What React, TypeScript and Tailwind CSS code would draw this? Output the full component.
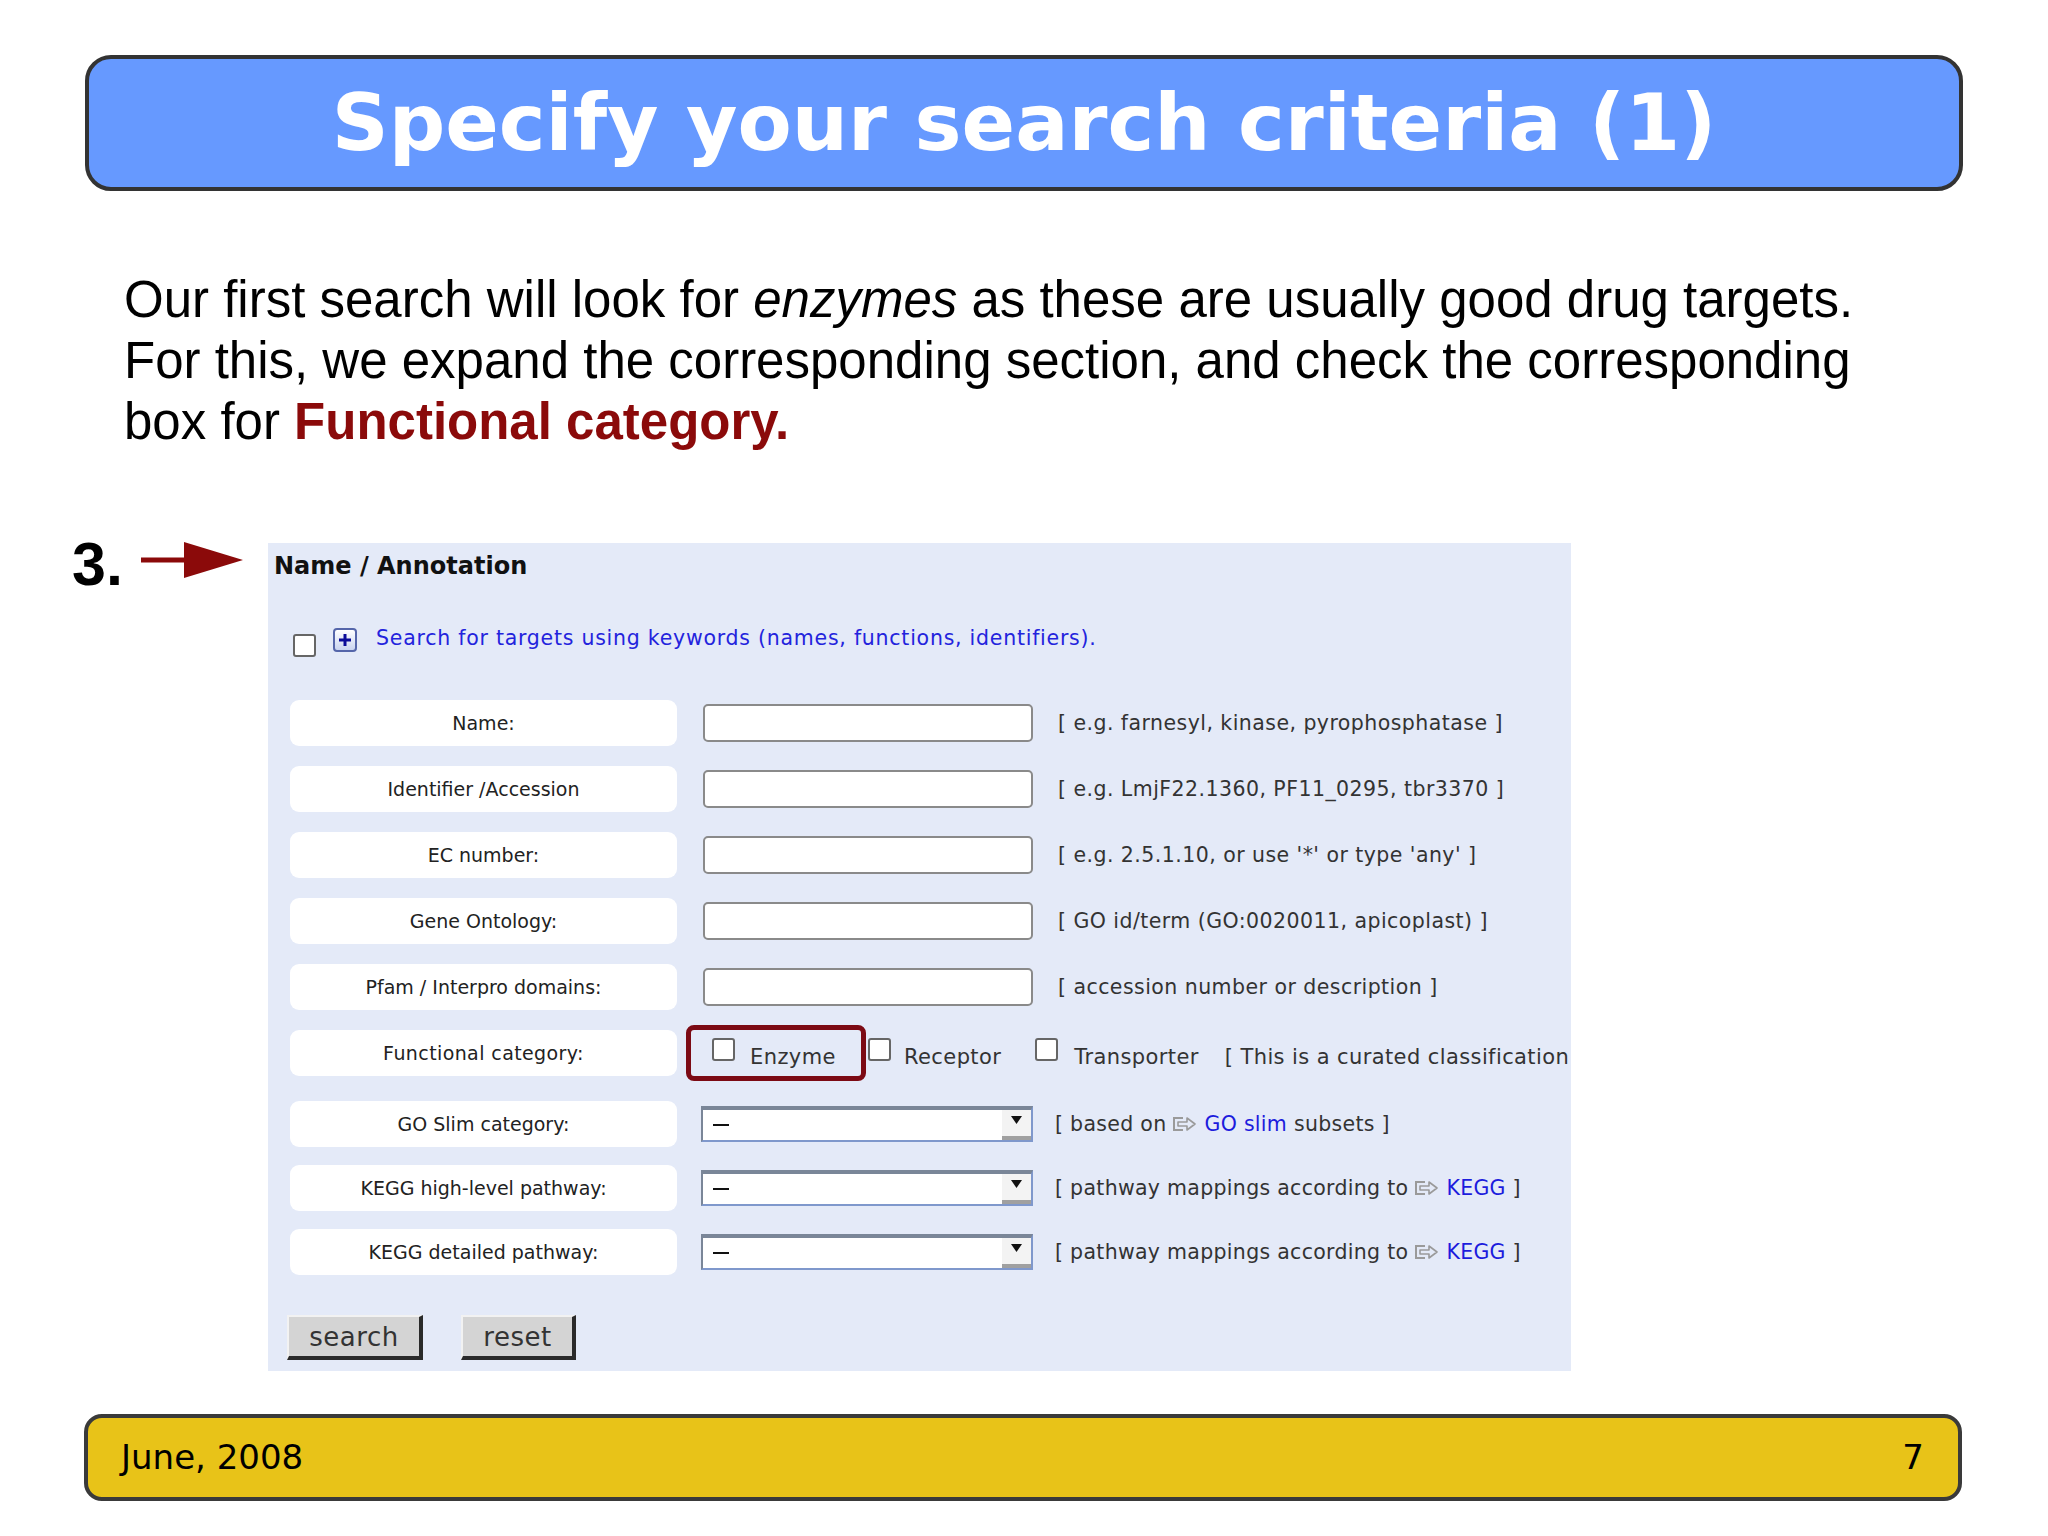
import React from "react";

const formFont = { fontFamily: '"DejaVu Sans", Verdana, sans-serif' } as const;

function Box({ className = "" }: { className?: string }) {
  return <span className={"inline-block w-[23px] h-[23px] bg-white border-2 border-[#666] rounded-[3px] shrink-0 " + className} />;
}

function ExtIcon() {
  return (
    <svg width="26" height="18" viewBox="0 0 26 18" className="inline-block mx-[6px] align-[-1px]">
      <path d="M11 3 H2 V15 H11" fill="none" stroke="#9a9a9a" strokeWidth="2" />
      <path d="M6 7 H15 V3 L23 9 L15 15 V11 H6 Z" fill="none" stroke="#9a9a9a" strokeWidth="1.6" strokeLinejoin="round" />
    </svg>
  );
}

function Label({ text }: { text: string }) {
  return (
    <div className="w-[387px] h-[46px] shrink-0 bg-white rounded-[9px] flex items-center justify-center text-[19px] text-[#222]">
      {text}
    </div>
  );
}

function TextRow({ label, hint }: { label: string; hint: string }) {
  return (
    <div className="flex items-center h-[46px]">
      <Label text={label} />
      <div className="ml-[26px] w-[330px] h-[38px] bg-white border-2 border-[#8a8a8a] rounded-[5px] shrink-0" />
      <div className="ml-[25px] text-[20.5px] tracking-[0.45px] text-[#333] whitespace-nowrap">{hint}</div>
    </div>
  );
}

function Select() {
  return (
    <div className="ml-[24px] w-[332px] h-[36px] shrink-0 bg-white flex border-2 border-[#7f98cc] border-t-[4px] border-t-[#7a8698] border-l-[#7a8698]">
      <div className="flex-1 flex items-center pl-[10px]">
        <span className="block w-[16px] h-[2px] bg-[#111]" />
      </div>
      <div className="w-[29px] h-full bg-[#f3f3f3] border-b-[4px] border-b-[#a0a0a0] flex justify-center pt-[5px]">
        <svg width="13" height="10" viewBox="0 0 13 10">
          <path d="M1 1 H12 L6.5 9 Z" fill="#111" />
        </svg>
      </div>
    </div>
  );
}

function SelectRow({ label, children }: { label: string; children: React.ReactNode }) {
  return (
    <div className="flex items-center h-[46px]">
      <Label text={label} />
      <Select />
      <div className="ml-[22px] text-[20.5px] tracking-[0.3px] text-[#333] whitespace-nowrap flex items-center">{children}</div>
    </div>
  );
}

export default function App() {
  return (
    <div className="w-[2048px] h-[1536px] bg-white overflow-hidden pt-[55px]">
      {/* Title */}
      <div className="ml-[85px] w-[1878px] h-[136px] border-[4px] border-[#333] rounded-[26px] bg-[#6699ff] flex items-center justify-center">
        <span className="text-white font-bold text-[79px] leading-none" style={{ fontFamily: '"DejaVu Sans", sans-serif' }}>
          Specify your search criteria (1)
        </span>
      </div>

      {/* Paragraph */}
      <div
        className="ml-[124px] mt-[78px] text-[51px] leading-[61px] text-black"
        style={{ fontFamily: '"Liberation Sans", Arial, sans-serif' }}
      >
        <div className="whitespace-nowrap">
          Our first search will look for <i>enzymes</i> as these are usually good drug targets.
        </div>
        <div className="whitespace-nowrap">For this, we expand the corresponding section, and check the corresponding</div>
        <div className="whitespace-nowrap">
          box for <b className="text-[#8b0a0a]">Functional category.</b>
        </div>
      </div>

      {/* Step row */}
      <div className="flex mt-[91px]">
        <div className="w-[268px] shrink-0 flex items-start pl-[72px]">
          <span
            className="font-bold text-[61px] leading-[62px] -mt-[10px] text-black"
            style={{ fontFamily: '"Liberation Sans", Arial, sans-serif' }}
          >
            3.
          </span>
          <svg width="102" height="36" viewBox="0 0 102 36" className="ml-[18px] mt-[-1px]">
            <rect x="0" y="15.5" width="50" height="5" fill="#8b0a0a" />
            <path d="M43 0 L102 18 L43 36 Z" fill="#8b0a0a" />
          </svg>
        </div>

        {/* Panel */}
        <div className="w-[1303px] h-[828px] bg-[#e4eaf8] overflow-hidden shrink-0" style={formFont}>
          <div className="pl-[6px] pt-[9px] text-[24px] leading-[28px] font-bold text-[#111]">Name / Annotation</div>

          <div className="flex items-center mt-[44px] pl-[25px] h-[28px]">
            <Box className="mt-[14px]" />
            <span className="ml-[17px] mt-[4px] w-[24px] h-[24px] rounded-[4px] border-2 border-[#5566aa] bg-[linear-gradient(#ffffff,#c9d4f0)] flex items-center justify-center">
              <svg width="14" height="14" viewBox="0 0 14 14">
                <path d="M7 1 V13 M1 7 H13" stroke="#0b0b99" strokeWidth="3" />
              </svg>
            </span>
            <span className="ml-[19px] text-[20.5px] tracking-[0.75px] text-[#2323dd] whitespace-nowrap">
              Search for targets using keywords (names, functions, identifiers).
            </span>
          </div>

          <div className="pl-[22px] mt-[48px] flex flex-col">
            <div className="flex flex-col gap-[20px]">
              <TextRow label="Name:" hint="[ e.g. farnesyl, kinase, pyrophosphatase ]" />
              <TextRow label="Identifier /Accession" hint="[ e.g. LmjF22.1360, PF11_0295, tbr3370 ]" />
              <TextRow label="EC number:" hint="[ e.g. 2.5.1.10, or use '*' or type 'any' ]" />
              <TextRow label="Gene Ontology:" hint="[ GO id/term (GO:0020011, apicoplast) ]" />
              <TextRow label="Pfam / Interpro domains:" hint="[ accession number or description ]" />

              {/* Functional category */}
              <div className="flex items-center h-[46px] text-[21px] tracking-[0.4px] text-[#333] whitespace-nowrap">
                <Label text="Functional category:" />
                <div className="ml-[9px] -my-[5px] h-[56px] w-[180px] shrink-0 border-[5px] border-[#7c0a14] rounded-[8px] flex items-center pl-[21px]">
                  <Box className="-mt-[8px]" />
                  <span className="ml-[15px] mt-[10px]">Enzyme</span>
                </div>
                <Box className="ml-[2px] -mt-[8px]" />
                <span className="ml-[13px] mt-[10px]">Receptor</span>
                <Box className="ml-[34px] -mt-[8px]" />
                <span className="ml-[16px] mt-[10px]">Transporter</span>
                <span className="ml-[26px] mt-[10px]">[ This is a curated classification</span>
              </div>
            </div>

            <div className="flex flex-col gap-[18px] mt-[25px]">
              <SelectRow label="GO Slim category:">
                <span>[ based on</span>
                <ExtIcon />
                <span className="text-[#1c1cdd]">GO slim</span>
                <span>&nbsp;subsets ]</span>
              </SelectRow>
              <SelectRow label="KEGG high-level pathway:">
                <span>[ pathway mappings according to</span>
                <ExtIcon />
                <span className="text-[#1c1cdd]">KEGG</span>
                <span>&nbsp;]</span>
              </SelectRow>
              <SelectRow label="KEGG detailed pathway:">
                <span>[ pathway mappings according to</span>
                <ExtIcon />
                <span className="text-[#1c1cdd]">KEGG</span>
                <span>&nbsp;]</span>
              </SelectRow>
            </div>

            <div className="flex mt-[40px] -ml-[3px]">
              <button className="w-[136px] h-[45px] bg-[#d4d4d4] border-t-2 border-l-2 border-[#f2f2f2] border-b-[4px] border-r-[4px] border-b-[#2a2a2a] border-r-[#2a2a2a] text-[26px] tracking-[0.5px] text-[#333] leading-none" style={formFont}>
                search
              </button>
              <button className="ml-[38px] w-[115px] h-[45px] bg-[#d4d4d4] border-t-2 border-l-2 border-[#f2f2f2] border-b-[4px] border-r-[4px] border-b-[#2a2a2a] border-r-[#2a2a2a] text-[26px] tracking-[0.5px] text-[#333] leading-none" style={formFont}>
                reset
              </button>
            </div>
          </div>
        </div>
      </div>

      {/* Footer */}
      <div
        className="ml-[84px] mt-[43px] w-[1878px] h-[87px] border-[4px] border-[#3a3a3a] rounded-[18px] bg-[#e8c318] flex items-center justify-between pl-[33px] pr-[34px] text-[34px] text-black"
        style={{ fontFamily: '"DejaVu Sans", sans-serif' }}
      >
        <span>June, 2008</span>
        <span>7</span>
      </div>
    </div>
  );
}
